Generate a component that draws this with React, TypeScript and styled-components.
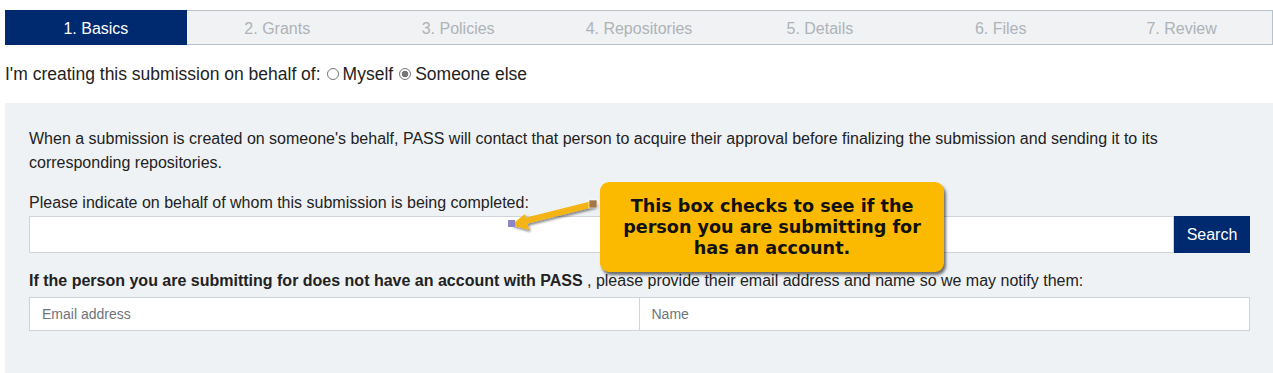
import React from 'react';
import styled, { createGlobalStyle } from 'styled-components';

const steps = ['1. Basics', '2. Grants', '3. Policies', '4. Repositories', '5. Details', '6. Files', '7. Review'];

const GlobalStyle = createGlobalStyle`
  body {
    margin: 0;
    background: #ffffff;
    font-family: Arial, "Liberation Sans", sans-serif;
    color: #212529;
  }
`;

function App() {
  return (
    <StyledPage>
      <GlobalStyle />
      <StyledSteps>
        {steps.map((s, i) => (
          <StyledStep key={s} active={i === 0}>{s}</StyledStep>
        ))}
      </StyledSteps>

      <StyledBehalfRow>
        I'm creating this submission on behalf of:
        <StyledRadio /> Myself
        <StyledRadio checked /> Someone else
      </StyledBehalfRow>

      <StyledPanel>
        <StyledText>
          When a submission is created on someone's behalf, PASS will contact that person to acquire their approval before finalizing the submission and sending it to its corresponding repositories.
        </StyledText>

        <StyledLabel>Please indicate on behalf of whom this submission is being completed:</StyledLabel>
        <StyledSearchRow>
          <StyledInput />
          <StyledButton>Search</StyledButton>
        </StyledSearchRow>

        <StyledLabel spaced>
          <b>If the person you are submitting for does not have an account with PASS</b> , please provide their email address and name so we may notify them:
        </StyledLabel>
        <StyledPairRow>
          <StyledInput small placeholder="Email address" />
          <StyledInput small placeholder="Name" />
        </StyledPairRow>

        <StyledArrow width="100" height="40" viewBox="0 0 100 40">
          <defs>
            <filter id="sh" x="-20%" y="-40%" width="140%" height="180%">
              <feDropShadow dx="1.5" dy="2" stdDeviation="1.2" floodColor="#000" floodOpacity="0.45" />
            </filter>
          </defs>
          <g filter="url(#sh)">
            <line x1="88" y1="9" x2="16" y2="27" stroke="#f4b416" strokeWidth="6" strokeLinecap="round" />
            <polygon points="6,30 20,19 24,35" fill="#f4b416" />
          </g>
          <rect x="84" y="5" width="8" height="8" fill="#a0784a" stroke="#fff" strokeWidth="0.6" />
          <rect x="3" y="25" width="7" height="7" fill="#8c86c8" />
        </StyledArrow>

        <StyledCallout>
          This box checks to see if the person you are submitting for has an account.
        </StyledCallout>
      </StyledPanel>
    </StyledPage>
  );
}

export default App;

const StyledPage = styled.div`
  padding: 10px 0 0 5px;
  width: 1268px;
`;

const StyledSteps = styled.div`
  display: grid;
  grid-template-columns: repeat(7, 1fr);
  border: 1px solid #b9c1ca;
  background: #f0f2f4;
  height: 33px;
`;

const StyledStep = styled.div<{ active?: boolean }>`
  display: flex;
  align-items: center;
  justify-content: center;
  padding-top: 3px;
  font-size: 16px;
  background: ${p => (p.active ? '#002a6f' : 'transparent')};
  color: ${p => (p.active ? '#ffffff' : '#aeb3b8')};
  margin: ${p => (p.active ? '-1px 0 -1px -1px' : '0')};
`;

const StyledBehalfRow = styled.div`
  display: flex;
  align-items: center;
  gap: 4px;
  height: 58px;
  font-size: 17.5px;
  color: #222;
`;

const StyledRadio = styled.span<{ checked?: boolean }>`
  display: inline-block;
  width: 10px;
  height: 10px;
  border-radius: 50%;
  border: 1px solid #777;
  margin-left: 2px;
  background: ${p => (p.checked ? 'radial-gradient(circle, #777 0 3px, #fff 3.6px)' : '#fff')};
`;

const StyledPanel = styled.div`
  position: relative;
  background: #eff2f5;
  padding: 24px 23px 48px 24px;
  font-size: 16px;
  color: #222;
`;

const StyledText = styled.p`
  margin: 0 0 18px;
  line-height: 24px;
`;

const StyledLabel = styled.div<{ spaced?: boolean }>`
  line-height: 20px;
  margin-top: ${p => (p.spaced ? '18px' : '0')};
  margin-bottom: 3px;
  b { font-weight: bold; }
`;

const StyledSearchRow = styled.div`
  display: flex;
  height: 37px;
`;

const StyledPairRow = styled.div`
  display: grid;
  grid-template-columns: 1fr 1fr;
  height: 34px;
  margin-top: 6px;
`;

const StyledInput = styled.input<{ small?: boolean }>`
  flex: 1;
  min-width: 0;
  box-sizing: border-box;
  height: 100%;
  border: 1px solid #ced4da;
  background: #fff;
  padding: 0 12px;
  font-family: Arial, "Liberation Sans", sans-serif;
  font-size: ${p => (p.small ? '14px' : '16px')};
  outline: none;
  & + & { margin-left: -1px; }
  &::placeholder { color: #6c757d; }
`;

const StyledButton = styled.button`
  width: 76px;
  border: none;
  background: #002a6f;
  color: #fff;
  font-family: Arial, "Liberation Sans", sans-serif;
  font-size: 16px;
  padding: 0;
`;

const StyledCallout = styled.div`
  position: absolute;
  left: 595px;
  top: 79px;
  width: 344px;
  height: 90px;
  box-sizing: border-box;
  padding: 1px 14px 0;
  border-radius: 9px;
  background: #fbb900;
  box-shadow: 2px 3px 3px rgba(0, 0, 0, 0.55);
  display: flex;
  align-items: center;
  justify-content: center;
  text-align: center;
  font-family: "DejaVu Sans", Verdana, sans-serif;
  font-weight: bold;
  font-size: 17.6px;
  line-height: 21px;
  color: #111;
`;

const StyledArrow = styled.svg`
  position: absolute;
  left: 500px;
  top: 92px;
  overflow: visible;
`;
